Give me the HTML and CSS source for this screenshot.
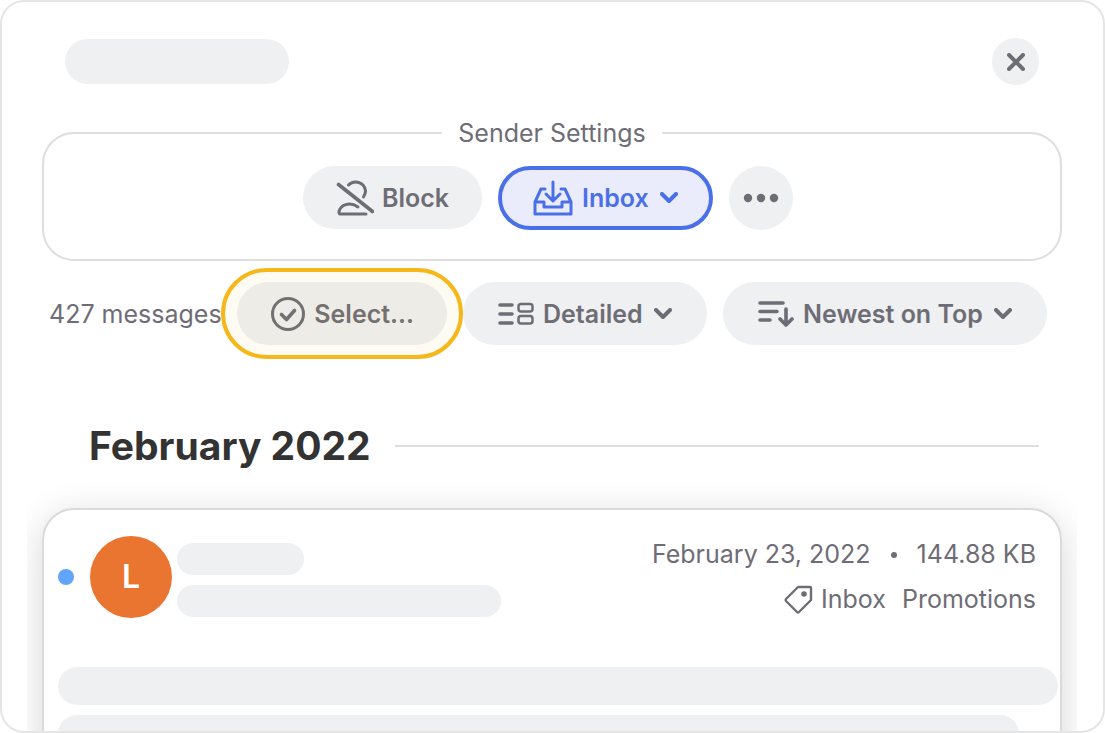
FILE: index.html
```html
<!DOCTYPE html>
<html lang="en">
<head>
    <meta charset="UTF-8">
    <meta name="viewport" content="width=device-width, initial-scale=1.0">
    <title>Sender Messages</title>
    <link rel="stylesheet" href="styles.css">
</head>
<body>
    <main class="window">
        <header class="header">
            <div class="placeholder placeholder-title"></div>
            <button type="button" class="close" aria-label="Close">
                <svg width="18" height="18" viewBox="0 0 18 18"><path d="M2 2l14 14M16 2L2 16" stroke-width="4"/></svg>
            </button>
        </header>

        <fieldset class="settings">
            <legend>Sender Settings</legend>
            <div class="settings-actions">
                <button type="button" class="pill">
                    <svg width="38" height="36" viewBox="0 0 38 36">
                        <path d="M2.5 4.5l34 27" stroke-width="3.6"/>
                        <path d="M12.5 5C16 1 23 .8 27 5c3.500 4 3 8 .5 12M30 34H5c-2.500 0-2.500-2.500-1-5 3-5 11-7 18-2" stroke-width="3"/>
                    </svg>
                    Block
                </button>
                <label class="pill pill-active">
                    <svg width="40" height="36" viewBox="0 0 40 36">
                        <path d="M12 9H8L2 22v12h36V22L32 9h-4M2 22h9v5h18v-5h9M20 2v19M13 14l7 7 7-7" stroke-width="3"/>
                    </svg>
                    <select aria-label="Move to"><option>Inbox</option></select>
                    <svg class="chevron" width="18" height="12" viewBox="0 0 18 12"><path d="M2 2l7 7 7-7" stroke-width="4"/></svg>
                </label>
                <button type="button" class="more" aria-label="More">
                    <svg width="36" height="10" viewBox="0 0 36 10">
                        <g class="solid" stroke="none"><circle cx="5" cy="5" r="4.2"/><circle cx="18" cy="5" r="4.2"/><circle cx="31" cy="5" r="4.2"/></g>
                    </svg>
                </button>
            </div>
        </fieldset>

        <div class="toolbar">
            <span class="count">427 messages</span>
            <div class="toolbar-actions">
                <button type="button" class="pill highlighted">
                    <svg width="36" height="36" viewBox="0 0 36 36">
                        <circle cx="18" cy="18" r="15.500" stroke-width="3"/>
                        <path d="M11.500 18.500l5 5 8-9" stroke-width="3.6"/>
                    </svg>
                    Select...
                </button>
                <label class="pill">
                    <svg width="36" height="24" viewBox="0 0 36 24">
                        <path d="M2 3h12M2 12h12M2 21h12" stroke-width="3.600"/>
                        <rect x="20.500" y="2" width="14" height="7.500" rx="2.500" stroke-width="2.500"/>
                        <rect x="20.500" y="14" width="14" height="7.500" rx="2.500" stroke-width="2.500"/>
                    </svg>
                    <select aria-label="View"><option>Detailed</option></select>
                    <svg class="chevron" width="18" height="12" viewBox="0 0 18 12"><path d="M2 2l7 7 7-7" stroke-width="4"/></svg>
                </label>
                <label class="pill">
                    <svg width="36" height="28" viewBox="0 0 36 28">
                        <path d="M2 3h23M2 11.500h17M2 20h10" stroke-width="3.600"/>
                        <path d="M28 9v16M22 19l6 6 6-6" stroke-width="3.600"/>
                    </svg>
                    <select aria-label="Sort order"><option>Newest on Top</option></select>
                    <svg class="chevron" width="18" height="12" viewBox="0 0 18 12"><path d="M2 2l7 7 7-7" stroke-width="4"/></svg>
                </label>
            </div>
        </div>

        <h1 class="month">February 2022</h1>

        <div class="list">
            <article class="message">
                <div class="message-top">
                    <span class="unread"></span>
                    <span class="avatar">L</span>
                    <div class="sender">
                        <div class="placeholder placeholder-name"></div>
                        <div class="placeholder placeholder-subject"></div>
                    </div>
                    <div class="meta">
                        <div class="meta-row meta-date">
                            <span>February 23, 2022</span>
                            <span class="separator"></span>
                            <span>144.88 KB</span>
                        </div>
                        <div class="meta-row meta-labels">
                            <svg width="30" height="30" viewBox="0 0 30 30">
                                <path d="M15 2h12q1 0 1 1v12L16 27q-1 1-2 0L3 16q-1-1 0-2z" stroke-width="2.400"/>
                                <circle class="solid" stroke="none" cx="21" cy="9" r="2.800"/>
                            </svg>
                            <span>Inbox</span>
                            <span class="label-next">Promotions</span>
                        </div>
                    </div>
                </div>
                <div class="message-body">
                    <div class="placeholder placeholder-line"></div>
                    <div class="placeholder placeholder-line placeholder-line-short"></div>
                </div>
            </article>
        </div>
    </main>
</body>
</html>
```

FILE: styles.css
```css
* {
    box-sizing: border-box;
}
body {
    margin: 0;
    background-color: #fff;
    color: #6e6d76;
    font-family: Inter, "Liberation Sans", sans-serif;
    font-size: 25px;
    line-height: 32px;
}
button, select {
    margin: 0;
    padding: 0;
    border: none;
    background: none;
    color: inherit;
    font: inherit;
    cursor: pointer;
}
select {
    appearance: none;
}
svg {
    flex: none;
    fill: none;
    stroke: currentColor;
    stroke-linecap: round;
    stroke-linejoin: round;
}
.solid {
    fill: currentColor;
}
.window {
    height: 100vh;
    overflow: hidden;
    border: 2px solid #e5e5e5;
    border-radius: 24px;
}
.placeholder {
    border-radius: 24px;
    background-color: #eff0f2;
}

/* Header */
.header {
    display: flex;
    justify-content: space-between;
    align-items: center;
    padding: 36px 64px 0 63px;
}
.placeholder-title {
    width: 224px;
    height: 45px;
}
.close {
    display: flex;
    justify-content: center;
    align-items: center;
    width: 47px;
    height: 47px;
    border-radius: 50%;
    background-color: #eff0f2;
}

/* Sender settings */
.settings {
    margin: 32px 41px 0 40px;
    padding: 17px 16px 29px;
    border: 2px solid #dedede;
    border-radius: 32px;
}
.settings legend {
    margin: 0 auto;
    padding: 0 16px;
}
.settings-actions {
    display: flex;
    justify-content: center;
    gap: 16px;
    padding-right: 8px;
}
.pill {
    display: flex;
    align-items: center;
    gap: 8px;
    height: 63px;
    padding: 0 33px;
    border-radius: 32px;
    background-color: #eff0f2;
    font-weight: 600;
    white-space: nowrap;
    cursor: pointer;
}
label.pill {
    gap: 9px;
    padding: 0 35px;
}
label.pill-active {
    height: 64px;
    padding: 0 31px;
    border: 4px solid #4a70e8;
    background-color: #ebecfb;
    color: #4a70e8;
}
.chevron {
    margin-left: 2px;
}
.more {
    display: flex;
    justify-content: center;
    align-items: center;
    width: 64px;
    height: 64px;
    border-radius: 50%;
    background-color: #eff0f2;
}

/* Toolbar */
.toolbar {
    display: flex;
    justify-content: space-between;
    align-items: center;
    margin-top: 21px;
    padding: 0 56px 0 47px;
}
.count {
    white-space: nowrap;
}
.toolbar-actions {
    display: flex;
    gap: 16px;
}
.highlighted {
    position: relative;
}
.highlighted::after {
    content: "";
    position: absolute;
    inset: -14px -16px;
    border: 4px solid #f5b719;
    border-radius: 48px;
    background-color: rgba(245, 183, 25, 0.05);
}

/* Message list */
.month {
    display: flex;
    align-items: center;
    gap: 24px;
    margin: 77px 64px 0 87px;
    color: #333;
    font-size: 39px;
    font-weight: 700;
    line-height: 48px;
}
.month::after {
    content: "";
    flex: 1;
    height: 2px;
    background-color: #dedede;
}
.list {
    margin: 0 26px 0 25px;
    padding: 38px 15px 0;
    overflow: hidden;
}
.message {
    padding: 22px 2px 32px 14px;
    border: 2px solid #dadada;
    border-radius: 32px;
    box-shadow: 0 8px 36px rgba(0, 0, 0, 0.16);
}
.message-top {
    display: flex;
    align-items: center;
    padding-right: 22px;
}
.unread {
    width: 16px;
    height: 16px;
    margin-right: 16px;
    border-radius: 50%;
    background-color: #60a5fa;
}
.avatar {
    display: flex;
    justify-content: center;
    align-items: center;
    width: 82px;
    height: 82px;
    margin-right: 5px;
    border-radius: 50%;
    background-color: #ea7530;
    color: #fff;
    font-size: 32px;
    font-weight: 600;
}
.sender {
    display: flex;
    flex-direction: column;
    gap: 10px;
    margin-top: 6px;
}
.placeholder-name {
    width: 127px;
    height: 32px;
}
.placeholder-subject {
    width: 324px;
    height: 32px;
}
.meta {
    margin-left: auto;
    line-height: 45px;
    white-space: nowrap;
}
.meta-row {
    display: flex;
    justify-content: flex-end;
    align-items: center;
}
.meta-date {
    gap: 20px;
}
.separator {
    width: 6px;
    height: 6px;
    border-radius: 50%;
    background-color: #6e6d76;
}
.meta-labels {
    gap: 8px;
}
.label-next {
    margin-left: 8px;
}
.message-body {
    display: flex;
    flex-direction: column;
    gap: 10px;
    margin-top: 45px;
}
.placeholder-line {
    height: 38px;
}
.placeholder-line-short {
    margin-right: 39px;
}
```
